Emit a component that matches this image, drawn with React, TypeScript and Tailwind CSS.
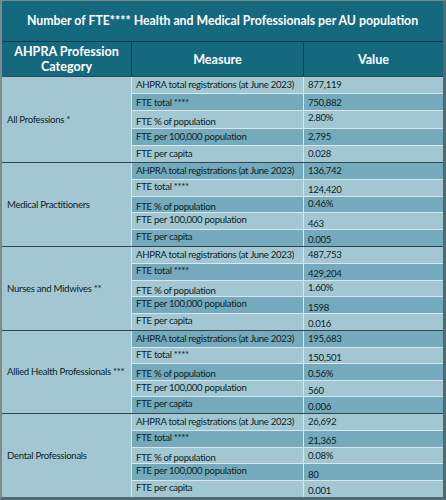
const LIGHT = "bg-[#a2c7d2]";
const DARK = "bg-[#74aabb]";

type Align = "top" | "mid" | "bottom";

const alignCls: Record<Align, string> = {
  top: "items-start pt-[2px]",
  mid: "items-center",
  bottom: "items-end pb-[1px]",
};

const measures = [
  "AHPRA total registrations (at June 2023)",
  "FTE total ****",
  "FTE % of population",
  "FTE per 100,000 population",
  "FTE per capita",
];

const groups = [
  {
    name: "All Professions *",
    h: "h-[86px]",
    values: ["877,119", "750,882", "2.80%", "2,795", "0.028"],
    mAlign: ["mid", "mid", "bottom", "mid", "mid"] as Align[],
    vAlign: ["mid", "mid", "top", "mid", "mid"] as Align[],
  },
  {
    name: "Medical Practitioners",
    h: "h-[84px]",
    values: ["136,742", "124,420", "0.46%", "463", "0.005"],
    mAlign: ["mid", "top", "bottom", "top", "top"] as Align[],
    vAlign: ["mid", "bottom", "top", "bottom", "bottom"] as Align[],
  },
  {
    name: "Nurses and Midwives **",
    h: "h-[84px]",
    values: ["487,753", "429,204", "1.60%", "1598", "0.016"],
    mAlign: ["mid", "top", "bottom", "top", "top"] as Align[],
    vAlign: ["mid", "bottom", "top", "bottom", "bottom"] as Align[],
  },
  {
    name: "Allied Health Professionals ***",
    h: "h-[83px]",
    values: ["195,683", "150,501", "0.56%", "560", "0.006"],
    mAlign: ["mid", "top", "bottom", "top", "top"] as Align[],
    vAlign: ["mid", "bottom", "bottom", "bottom", "bottom"] as Align[],
  },
  {
    name: "Dental Professionals",
    h: "h-[84px]",
    values: ["26,692", "21,365", "0.08%", "80", "0.001"],
    mAlign: ["mid", "top", "bottom", "top", "top"] as Align[],
    vAlign: ["mid", "bottom", "mid", "bottom", "bottom"] as Align[],
  },
];

function Group({ g, offset }: { g: (typeof groups)[number]; offset: number }) {
  return (
    <div className={`grid grid-cols-[130px_172px_1fr] ${g.h} border-t border-[#2c4952]`}>
      <div className={`${LIGHT} flex items-center pl-[5px] border-r border-[#d6e8ee]`}>{g.name}</div>
      <div className="col-span-2 flex flex-col">
        {measures.map((m, i) => {
          const bg = (offset + i) % 2 === 0 ? LIGHT : DARK;
          return (
            <div
              key={m}
              className={`flex-1 grid grid-cols-[172px_1fr] ${i > 0 ? "border-t border-[#d6e8ee]" : ""}`}
            >
              <div className={`${bg} flex ${alignCls[g.mAlign[i]]} pl-[4px] border-r border-[#d6e8ee]`}>{m}</div>
              <div className={`${bg} flex ${alignCls[g.vAlign[i]]} pl-[4px]`}>{g.values[i]}</div>
            </div>
          );
        })}
      </div>
    </div>
  );
}

export default function App() {
  return (
    <div
      className="w-[446px] h-[500px] overflow-hidden bg-[#a2c7d2] border-l-2 border-r-[3px] border-t border-b-[3px] border-l-[#7d8a8e] border-r-[#4f6a72] border-t-[#7d8a8e] border-b-[#4f6a72] flex flex-col text-[9.6px] tracking-[-0.3px] leading-none text-[#0c1f24]"
      style={{ fontFamily: "Lato, 'Open Sans', sans-serif" }}
    >
      <div className="h-[41px] shrink-0 bg-[#15697f] flex items-center justify-center text-white font-bold text-[12.3px] tracking-normal border-b border-[#0b3a48]">
        Number of FTE**** Health and Medical Professionals per AU population
      </div>
      <div className="h-[34px] shrink-0 grid grid-cols-[130px_172px_1fr] bg-[#15697f] text-white font-bold text-[12.6px] tracking-normal leading-[15px]">
        <div className="flex items-center justify-center text-center border-r border-[#0b3a48]">
          AHPRA Profession
          <br />
          Category
        </div>
        <div className="flex items-center justify-center border-r border-[#0b3a48]">Measure</div>
        <div className="flex items-center justify-center">Value</div>
      </div>
      {groups.map((g, gi) => (
        <Group key={g.name} g={g} offset={gi * 5} />
      ))}
    </div>
  );
}
